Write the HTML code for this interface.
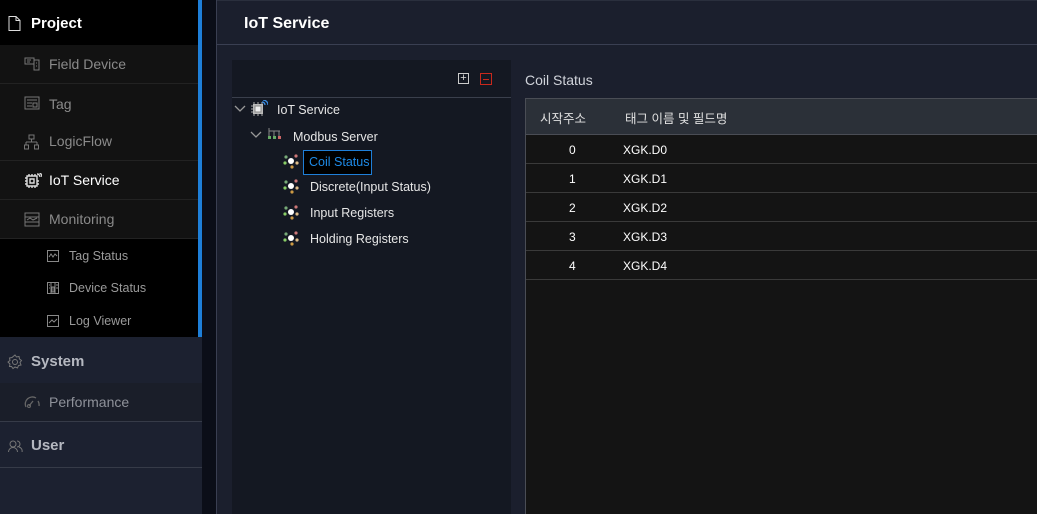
<!DOCTYPE html>
<html><head><meta charset="utf-8"><style>
*{margin:0;padding:0;box-sizing:border-box}
body{width:1037px;height:514px;overflow:hidden;background:#1b1f2d;font-family:"Liberation Sans","Noto Sans CJK KR",sans-serif;position:relative}
.a{position:absolute}
.side{left:0;top:0;width:202px;height:514px;background:#1c2130}
.it{position:absolute;left:0;width:198px;height:39px;background:#121212;color:#8a8a8a;font-size:14px;display:flex;align-items:center;padding-left:49px}
.it svg{position:absolute;left:24px;top:12px}
.sub{position:absolute;left:0;width:198px;color:#9a9a9a;font-size:12.5px;padding-left:69px}
.sub svg{position:absolute;left:47px;top:1px}
.hd{position:absolute;left:0;width:202px;color:#b5b8c0;font-weight:bold;font-size:15px;padding-left:31px;display:flex;align-items:center}
.tr{position:absolute;color:#e6e6e6;font-size:12.5px}
.row{position:absolute;left:526px;width:511px;height:29px;background:#141414;border-bottom:1px solid #3a3a3a;color:#fff;font-size:12px}
.row span{position:absolute;top:8px}
</style></head><body>
<div class="a side"></div>
<div class="a" style="left:0;top:0;width:198px;height:337px;background:#000"></div>
<div class="a" style="left:198px;top:0;width:4px;height:337px;background:#1e7fd8"></div>
<div class="a" style="left:202px;top:0;width:14px;height:514px;background:#0b0e18"></div>
<div class="a" style="left:216px;top:0;width:1px;height:514px;background:#3a3f52"></div>
<div class="hd" style="top:0;height:45px;width:198px;background:#000;color:#fff;padding-left:31px;padding-top:2px">Project</div>
<svg class="a" style="left:8px;top:16px" width="13" height="15" viewBox="0 0 13 15"><path d="M1 .5h7l4 4v10H1z M8 .5v4h4" fill="none" stroke="#ddd"/></svg>

<div class="it" style="top:45px;border-bottom:1px solid #222">Field Device<svg width="18" height="14" viewBox="0 0 18 14"><path d="M1 1h9v6H1z M3 3h4 M3 5h3 M10 3h5v10h-5z M12 6h1 M12 9h1" fill="none" stroke="#777"/></svg></div>
<div class="it" style="top:84px">Tag<svg width="16" height="14" viewBox="0 0 16 14"><path d="M1 1h14v12H1z M3 4h10 M3 7h5 M3 10h5 M9 7h4v4H9z" fill="none" stroke="#777"/></svg></div>
<div class="it" style="top:122px;border-bottom:1px solid #222">LogicFlow<svg width="16" height="16" viewBox="0 0 16 16"><path d="M5 1h5v4H5z M7.5 5v3 M2 8h11 M2 8v3 M13 8v3 M0.5 11h4v4h-4z M10.5 11h4v4h-4z" fill="none" stroke="#777"/></svg></div>
<div class="it" style="top:161px;color:#fff;border-bottom:1px solid #222">IoT Service<svg width="18" height="16" viewBox="0 0 18 16"><path d="M3 3h10v10H3z M6 6h4v4H6z M5 1v2 M8 1v2 M11 1v2 M5 13v2 M8 13v2 M11 13v2 M1 5h2 M1 8h2 M1 11h2 M13 8h2 M13 11h2 M13 1a3 3 0 0 1 3 3 M13 -1a5 5 0 0 1 5 5" fill="none" stroke="#ddd" stroke-width="1.4"/></svg></div>
<div class="it" style="top:200px;border-bottom:1px solid #222">Monitoring<svg width="16" height="15" viewBox="0 0 16 15"><path d="M1 1h14v13H1z M1 5h14 M1 10h14 M3 8l3-2 3 2 4-2" fill="none" stroke="#777"/></svg></div>

<div class="sub" style="top:249px">Tag Status<svg width="12" height="12" viewBox="0 0 12 12"><path d="M.5 .5h11v11H.5z M2 7l2-3 2 3 2-3 2 2" fill="none" stroke="#888"/></svg></div>
<div class="sub" style="top:281px">Device Status<svg width="12" height="12" viewBox="0 0 12 12"><path d="M.5 .5h11v11H.5z M4 1v10 M8 1v10 M2 3h1 M2 6h1 M9 3h2 M9 6h2 M5 5h2v5H5z" fill="none" stroke="#888"/></svg></div>
<div class="sub" style="top:314px">Log Viewer<svg width="12" height="12" viewBox="0 0 12 12"><path d="M.5 .5h11v11H.5z M2 8l3-3 2 2 3-3" fill="none" stroke="#888"/></svg></div>

<div class="hd" style="top:338px;height:46px">System</div>
<svg class="a" style="left:7px;top:354px" width="16" height="16" viewBox="0 0 16 16"><circle cx="8" cy="8" r="2.5" fill="none" stroke="#777"/><path d="M8 1l1.5 2 2.5-.5.5 2.5 2 1.5-1.5 2 1 2.5-2.5.5-1 2.5-2.5-1-2 1.5-1.5-2L2.5 12.5 3 10 1 8l2-1.5L2.5 4 5 3.5z" fill="none" stroke="#777"/></svg>
<div class="it" style="top:383px;height:39px;width:202px;background:#1a1e29;border-bottom:1px solid #363b48;color:#8f929a">Performance<svg width="16" height="14" viewBox="0 0 16 14"><path d="M2 12a7 7 0 0 1 10-9 M14 6a7 7 0 0 1 1 5 M5 11l4-5" fill="none" stroke="#666" stroke-width="1.3"/><circle cx="5" cy="11" r="1.5" fill="none" stroke="#666"/></svg></div>
<div class="hd" style="top:423px;height:45px;border-bottom:1px solid #363b48">User</div>
<svg class="a" style="left:8px;top:440px" width="15" height="12" viewBox="0 0 15 12"><circle cx="5" cy="4" r="3" fill="none" stroke="#777"/><path d="M0.5 12a4.5 4.5 0 0 1 9 0 M9 1a3 3 0 0 1 0 6 M11 7a4 4 0 0 1 3 5" fill="none" stroke="#777"/></svg>

<!-- main -->
<div class="a" style="left:217px;top:0;width:820px;height:45px;border-bottom:1px solid #3a3f52;border-top:1px solid #2a2f3d"></div>
<div class="a" style="left:244px;top:15px;color:#fff;font-weight:bold;font-size:16px">IoT Service</div>

<div class="a" style="left:232px;top:60px;width:279px;height:454px;background:#141822"></div>
<div class="a" style="left:232px;top:97px;width:279px;height:1px;background:#3a3f4c"></div>
<div class="a" style="left:458px;top:73px;width:11px;height:11px;border:1px solid #ccc;color:#ddd;font-size:11px;line-height:8px;text-align:center">+</div>
<div class="a" style="left:480px;top:73px;width:12px;height:12px;border:1px solid #c8281c"><div style="position:absolute;left:2px;top:5px;width:6px;height:1px;background:#c8281c"></div></div>

<svg class="a" style="left:234px;top:104px" width="12" height="10"><path d="M1 2l5 5 5-5" fill="none" stroke="#999" stroke-width="1.3"/></svg>
<svg class="a" style="left:250px;top:100px" width="18" height="17" viewBox="0 0 18 17"><rect x="3" y="4" width="10" height="10" fill="#bbb"/><rect x="5" y="6" width="6" height="6" fill="#eee" stroke="#888"/><path d="M4 2v2M8 2v2M12 2v2M4 14v2M8 14v2M12 14v2M1 6h2M1 9h2M1 12h2" stroke="#aaa"/><path d="M12 2a3 3 0 0 1 3 3M13 0a5 5 0 0 1 5 5" fill="none" stroke="#3a8ee6" stroke-width="1.3"/></svg>
<div class="tr" style="left:277px;top:103px">IoT Service</div>
<svg class="a" style="left:250px;top:130px" width="12" height="10"><path d="M1 2l5 5 5-5" fill="none" stroke="#999" stroke-width="1.3"/></svg>
<svg class="a" style="left:267px;top:127px" width="16" height="14" viewBox="0 0 16 14"><path d="M2 1v10 M2 4h11 M7 4v6 M12 4v6" stroke="#888" fill="none"/><rect x="1" y="9" width="3" height="3" fill="#6a6"/><rect x="6" y="9" width="3" height="3" fill="#6a6"/><rect x="11" y="9" width="3" height="3" fill="#c66"/></svg>
<div class="tr" style="left:293px;top:130px">Modbus Server</div>

<svg class="a" style="left:283px;top:153px" width="16" height="16" viewBox="0 0 16 16"><circle cx="8" cy="8" r="3" fill="#fff"/><circle cx="3" cy="4" r="1.6" fill="#7a7"/><circle cx="13" cy="3" r="1.6" fill="#c77"/><circle cx="2" cy="10" r="1.6" fill="#8c6"/><circle cx="14" cy="10" r="1.6" fill="#db8"/><circle cx="9" cy="14" r="1.6" fill="#c94"/></svg>
<div class="a" style="left:303px;top:150px;width:69px;height:25px;border:1px solid #1f7fd8;background:#000;color:#1e8ae6;font-size:12.5px;padding:4px 0 0 5px">Coil Status</div>
<svg class="a" style="left:283px;top:178px" width="16" height="16" viewBox="0 0 16 16"><circle cx="8" cy="8" r="3" fill="#fff"/><circle cx="3" cy="4" r="1.6" fill="#7a7"/><circle cx="13" cy="3" r="1.6" fill="#c77"/><circle cx="2" cy="10" r="1.6" fill="#8c6"/><circle cx="14" cy="10" r="1.6" fill="#db8"/><circle cx="9" cy="14" r="1.6" fill="#c94"/></svg>
<div class="tr" style="left:310px;top:180px">Discrete(Input Status)</div>
<svg class="a" style="left:283px;top:204px" width="16" height="16" viewBox="0 0 16 16"><circle cx="8" cy="8" r="3" fill="#fff"/><circle cx="3" cy="4" r="1.6" fill="#7a7"/><circle cx="13" cy="3" r="1.6" fill="#c77"/><circle cx="2" cy="10" r="1.6" fill="#8c6"/><circle cx="14" cy="10" r="1.6" fill="#db8"/><circle cx="9" cy="14" r="1.6" fill="#c94"/></svg>
<div class="tr" style="left:310px;top:206px">Input Registers</div>
<svg class="a" style="left:283px;top:230px" width="16" height="16" viewBox="0 0 16 16"><circle cx="8" cy="8" r="3" fill="#fff"/><circle cx="3" cy="4" r="1.6" fill="#7a7"/><circle cx="13" cy="3" r="1.6" fill="#c77"/><circle cx="2" cy="10" r="1.6" fill="#8c6"/><circle cx="14" cy="10" r="1.6" fill="#db8"/><circle cx="9" cy="14" r="1.6" fill="#c94"/></svg>
<div class="tr" style="left:310px;top:232px">Holding Registers</div>

<div class="a" style="left:525px;top:72px;color:#d0d3da;font-size:14px">Coil Status</div>
<div class="a" style="left:525px;top:98px;width:512px;height:416px;background:#141414;border-left:1px solid #4a4d55;border-top:1px solid #4a4d55"></div>
<div class="a" style="left:526px;top:99px;width:511px;height:36px;background:#2b3038;border-bottom:1px solid #4a4d55;color:#e0e0e0;font-size:12.5px"><span style="position:absolute;left:14px;top:9px">시작주소</span><span style="position:absolute;left:99px;top:9px">태그 이름 및 필드명</span></div>
<div class="row" style="top:135px"><span style="left:43px">0</span><span style="left:97px">XGK.D0</span></div>
<div class="row" style="top:164px"><span style="left:43px">1</span><span style="left:97px">XGK.D1</span></div>
<div class="row" style="top:193px"><span style="left:43px">2</span><span style="left:97px">XGK.D2</span></div>
<div class="row" style="top:222px"><span style="left:43px">3</span><span style="left:97px">XGK.D3</span></div>
<div class="row" style="top:251px"><span style="left:43px">4</span><span style="left:97px">XGK.D4</span></div>
</body></html>
